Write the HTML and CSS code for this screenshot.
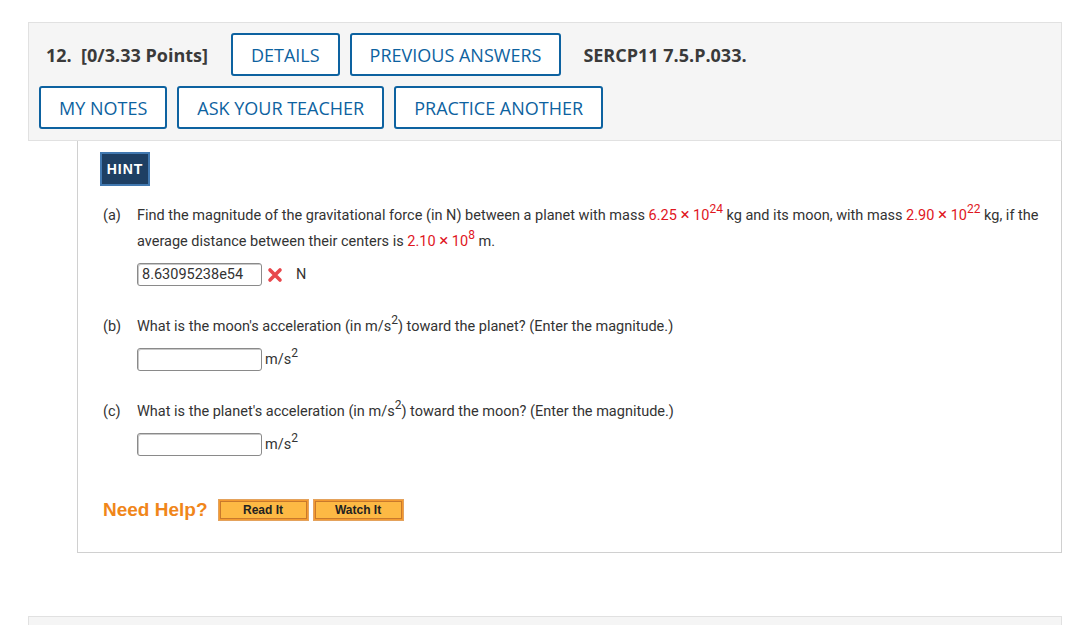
FILE: index.html
```html
<!DOCTYPE html>
<html>
<head>
<meta charset="utf-8">
<link rel="stylesheet" href="styles.css">
</head>
<body>
<div class="question">
  <div class="qhead">
    <div class="row">
      <span class="qnum">12.&nbsp; [0/3.33 Points]</span>
      <button class="btn">DETAILS</button>
      <button class="btn">PREVIOUS ANSWERS</button>
      <span class="qcode">SERCP11 7.5.P.033.</span>
    </div>
    <div class="row row2">
      <button class="btn">MY NOTES</button>
      <button class="btn">ASK YOUR TEACHER</button>
      <button class="btn">PRACTICE ANOTHER</button>
    </div>
  </div>
  <div class="qbody">
    <button class="hint">HINT</button>
    <div class="part part-a">
      <span class="plabel">(a)</span>
      <div class="ptext">
        <p>Find the magnitude of the gravitational force (in N) between a planet with mass <span class="red">6.25 <span class="times">&times;</span> 10<sup>24</sup></span> kg and its moon, with mass <span class="red">2.90 <span class="times">&times;</span> 10<sup>22</sup></span> kg, if the average distance between their centers is <span class="red">2.10 <span class="times">&times;</span> 10<sup>8</sup></span> m.</p>
        <div class="answer">
          <span class="inp filled">8.63095238e54</span>
          <svg class="xmark" width="16" height="16" viewBox="0 0 16 16"><path d="M3 3 L13 13 M13 3 L3 13" stroke="#e8474c" stroke-width="3.6" stroke-linecap="round"/></svg>
          <span class="unit">N</span>
        </div>
      </div>
    </div>
    <div class="part">
      <span class="plabel">(b)</span>
      <div class="ptext">
        <p>What is the moon's acceleration (in m/s<sup>2</sup>) toward the planet? (Enter the magnitude.)</p>
        <div class="answer">
          <span class="inp"></span>
          <span class="unit2">m/s<sup>2</sup></span>
        </div>
      </div>
    </div>
    <div class="part">
      <span class="plabel">(c)</span>
      <div class="ptext">
        <p>What is the planet's acceleration (in m/s<sup>2</sup>) toward the moon? (Enter the magnitude.)</p>
        <div class="answer">
          <span class="inp"></span>
          <span class="unit2">m/s<sup>2</sup></span>
        </div>
      </div>
    </div>
    <div class="help">
      <span class="needhelp">Need Help?</span>
      <button class="hbtn">Read It</button>
      <button class="hbtn">Watch It</button>
    </div>
  </div>
</div>
<div class="nextq"></div>
</body>
</html>
```

FILE: styles.css
```css
html, body {
  margin: 0;
  padding: 0;
  background: #fff;
}
body {
  padding: 22px 18px 0 28px;
  font-family: Roboto, "Liberation Sans", sans-serif;
  color: #333;
}
.qhead {
  background: #f5f5f5;
  border: 1px solid #e1e1e1;
  padding: 10px 10px 11px 10px;
}
.row {
  display: flex;
  align-items: center;
  gap: 10px;
}
.row2 {
  margin-top: 10px;
}
.qnum {
  font-family: "Open Sans", sans-serif;
  font-weight: 700;
  font-size: 18px;
  color: #3a3a3a;
  margin-left: 7px;
  margin-right: 13px;
}
.qcode {
  font-family: "Open Sans", sans-serif;
  font-weight: 700;
  font-size: 18px;
  color: #3a3a3a;
  margin-left: 12px;
}
.btn {
  font-family: "Open Sans", sans-serif;
  font-size: 18px;
  color: #0d62a0;
  background: #fff;
  border: 2px solid #0d62a0;
  border-radius: 3px;
  height: 43px;
  padding: 0 18px;
  cursor: pointer;
}
.qbody {
  margin-left: 49px;
  border: 1px solid #d0d0d0;
  border-top: none;
  padding: 11px 22px 31px 25px;
  font-size: 14.5px;
}
.hint {
  display: block;
  margin-left: -3px;
  background: #1e3f63;
  color: #fff;
  border: 2px solid #4178b0;
  font-family: "Liberation Sans", Arial, sans-serif;
  font-weight: 700;
  font-size: 14px;
  letter-spacing: 1px;
  height: 34px;
  width: 50px;
  padding: 0;
}
.part {
  display: grid;
  grid-template-columns: 34px 1fr;
  margin-top: 28px;
  line-height: 26px;
}
.part-a {
  margin-top: 17px;
}
.plabel {
  color: #333;
}
.ptext p {
  margin: 0;
}
sup {
  font-size: 12px;
  line-height: 0;
  vertical-align: 7px;
}
.red {
  color: #e0161e;
}
.times {
  font-size: 17px;
  line-height: 0;
}
.answer {
  display: flex;
  align-items: center;
  margin-top: 8px;
  height: 23px;
}
.inp {
  box-sizing: border-box;
  width: 125px;
  height: 23px;
  border: 1px solid #8a8a8a;
  border-radius: 3px;
  box-shadow: inset 1px 1px 0 #c8c8c8;
  padding: 0 4px;
  line-height: 21px;
  font-size: 14.5px;
  color: #333;
  background: #fff;
}
.xmark {
  margin-left: 5px;
}
.unit {
  margin-left: 13px;
}
.unit2 {
  margin-left: 3px;
  line-height: 23px;
}
.help {
  display: flex;
  align-items: center;
  margin-top: 43px;
}
.needhelp {
  font-family: "Liberation Sans", Arial, sans-serif;
  font-weight: 700;
  font-size: 19px;
  color: #f0861a;
  margin-right: 10px;
}
.hbtn {
  width: 91px;
  height: 22px;
  padding: 0;
  margin-right: 4px;
  background: #fdb944;
  border: 1px solid #e4a25c;
  box-shadow: inset 0 0 0 1px #f49a30, inset 0 0 0 2px #c9792c;
  font-family: "Liberation Sans", Arial, sans-serif;
  font-weight: 700;
  font-size: 12px;
  color: #222;
}
.nextq {
  margin-top: 63px;
  height: 20px;
  background: #f5f5f5;
  border: 1px solid #e1e1e1;
}
```
